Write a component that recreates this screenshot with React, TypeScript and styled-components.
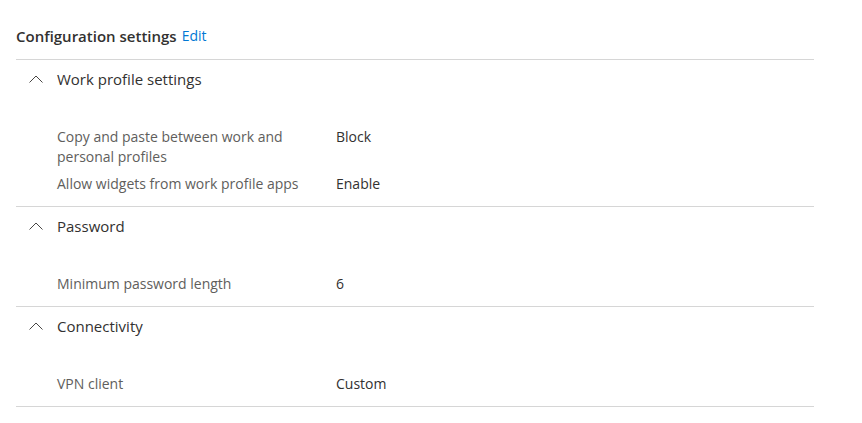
import styled, { createGlobalStyle } from "styled-components";

type Setting = { label: string; value: string };
type Section = { title: string; settings: Setting[] };

const sections: Section[] = [
  {
    title: "Work profile settings",
    settings: [
      { label: "Copy and paste between work and personal profiles", value: "Block" },
      { label: "Allow widgets from work profile apps", value: "Enable" },
    ],
  },
  {
    title: "Password",
    settings: [{ label: "Minimum password length", value: "6" }],
  },
  {
    title: "Connectivity",
    settings: [{ label: "VPN client", value: "Custom" }],
  },
];

const GlobalStyle = createGlobalStyle`
  body {
    margin: 0;
    background: #ffffff;
    font-family: "Segoe UI", "Open Sans", "Noto Sans", sans-serif;
    color: #323130;
  }
`;

const Chevron = () => (
  <svg width="14" height="8" viewBox="0 0 14 8" fill="none">
    <path d="M0.5 7.5L7 1L13.5 7.5" stroke="#484644" strokeWidth="1" />
  </svg>
);

const App = () => (
  <>
    <GlobalStyle />
    <Page>
      <TitleRow>
        <Title>Configuration settings</Title>
        <EditLink>Edit</EditLink>
      </TitleRow>
      {sections.map((section) => (
        <SectionBlock key={section.title}>
          <SectionHeader>
            <ChevronWrap>
              <Chevron />
            </ChevronWrap>
            <SectionTitle>{section.title}</SectionTitle>
          </SectionHeader>
          <SettingList>
            {section.settings.map((s) => (
              <SettingRow key={s.label}>
                <Label>{s.label}</Label>
                <Value>{s.value}</Value>
              </SettingRow>
            ))}
          </SettingList>
        </SectionBlock>
      ))}
    </Page>
  </>
);

const Page = styled.div`
  width: 798px;
  padding: 26px 0 0 16px;
`;

const TitleRow = styled.div`
  display: flex;
  align-items: center;
  gap: 5px;
  height: 20px;
  line-height: 20px;
  padding-bottom: 13px;
  border-bottom: 1px solid #d6d6d6;
`;

const Title = styled.span`
  font-size: 15px;
  font-weight: 600;
  color: #323130;
`;

const EditLink = styled.a`
  font-size: 14px;
  color: #0078d4;
  cursor: pointer;
`;

const SectionBlock = styled.section`
  border-bottom: 1px solid #d6d6d6;
  padding-bottom: 12px;
`;

const SectionHeader = styled.div`
  display: flex;
  align-items: center;
  height: 37px;
  padding-bottom: 4px;
  padding-left: 13px;
`;

const ChevronWrap = styled.span`
  display: flex;
  width: 28px;
`;

const SectionTitle = styled.span`
  font-size: 15px;
  color: #323130;
`;

const SettingList = styled.div`
  display: flex;
  flex-direction: column;
  gap: 7px;
  padding-top: 26px;
  padding-left: 41px;
`;

const SettingRow = styled.div`
  display: flex;
  font-size: 14px;
  line-height: 20px;
`;

const Label = styled.div`
  width: 263px;
  padding-right: 16px;
  color: #605e5c;
`;

const Value = styled.div`
  color: #323130;
`;

export default App;
